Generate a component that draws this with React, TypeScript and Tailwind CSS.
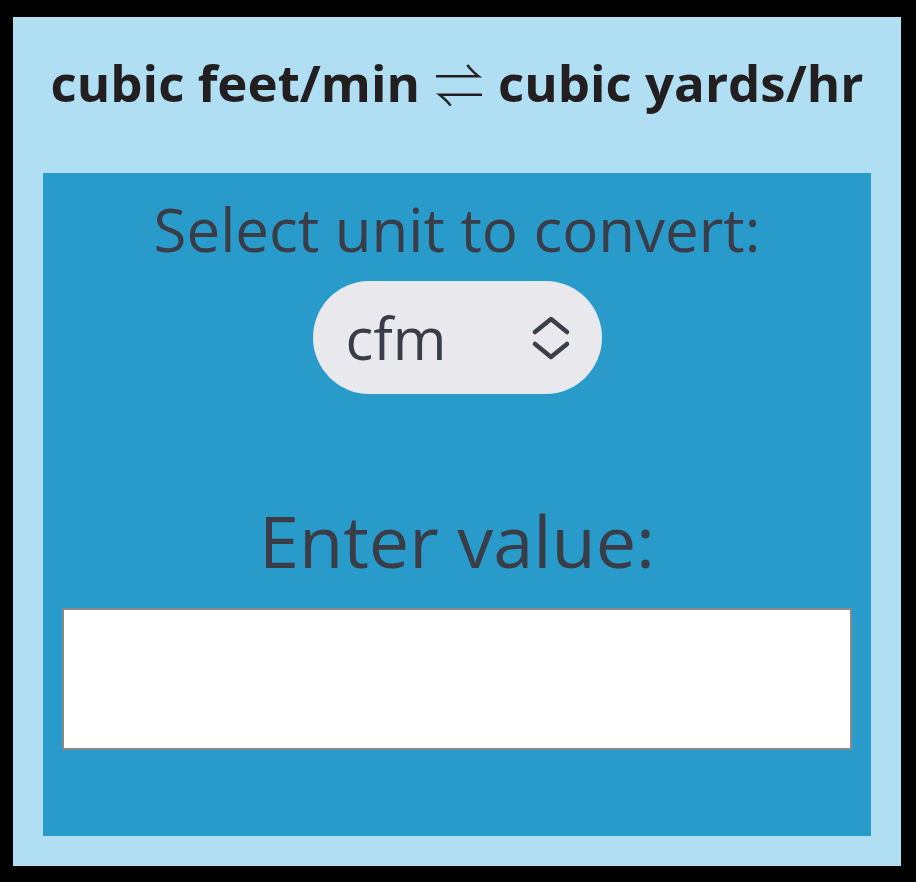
import { useState } from "react";

const units = [
  { value: "cfm", label: "cfm" },
  { value: "cyh", label: "cy/hr" },
];

function Chevrons() {
  return (
    <svg width="40" height="46" viewBox="0 0 40 46" fill="none" stroke="#3c3f48" strokeWidth="4.5" strokeLinecap="round" strokeLinejoin="round">
      <path d="M4 17 L20 4 L36 17" />
      <path d="M4 29 L20 42 L36 29" />
    </svg>
  );
}

export default function App() {
  const [unit, setUnit] = useState("cfm");
  const [value, setValue] = useState("");

  return (
    <div className="w-[916px] h-[882px] border-t-[17px] border-l-[13px] border-r-[15px] border-b-[16px] border-black bg-[#b0def2] flex flex-col font-['Open_Sans',sans-serif]">
      <h1 className="h-[156px] flex items-center justify-center text-[51px] font-bold text-[#231f20] pb-[26px]">
        cubic feet/min
        <span className="mx-[14px] font-light font-['Noto_Sans_CJK_JP','DejaVu_Sans',sans-serif] text-[50px] leading-none">⇌</span>
        cubic yards/hr
      </h1>

      <div className="mx-[30px] mb-[30px] flex-1 bg-[#289bcb] flex flex-col items-center px-[19px] text-[#3a3d47]">
        <label htmlFor="unit" className="mt-5 text-[60px] leading-[72px]">
          Select unit to convert:
        </label>
        <div className="relative mt-[16px] w-[289px] h-[113px] rounded-full bg-[#e9e9ed]">
          <select
            id="unit"
            value={unit}
            onChange={(e) => setUnit(e.target.value)}
            className="appearance-none w-full h-full bg-transparent rounded-full pl-[33px] text-[58px] text-[#3a3d47] outline-none"
          >
            {units.map((u) => (
              <option key={u.value} value={u.value}>
                {u.label}
              </option>
            ))}
          </select>
          <div className="absolute right-[31px] top-[34px] pointer-events-none">
            <Chevrons />
          </div>
        </div>

        <label htmlFor="amount" className="mt-[104px] text-[72px] leading-[84px]">
          Enter value:
        </label>
        <input
          id="amount"
          type="number"
          value={value}
          onChange={(e) => setValue(e.target.value)}
          className="mt-[26px] w-full h-[142px] bg-white border-2 border-[#868a8f] outline-none px-4 text-[48px]"
        />
      </div>
    </div>
  );
}
